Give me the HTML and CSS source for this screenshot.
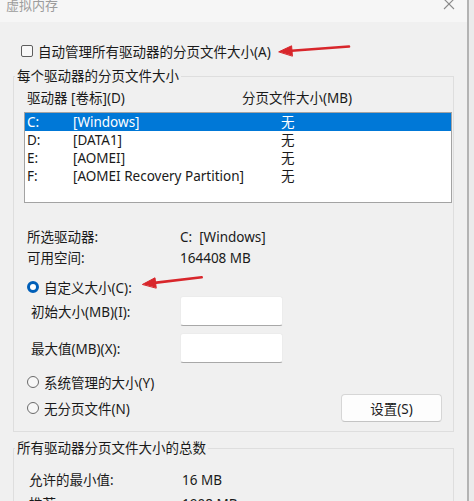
FILE: index.html
```html
<!DOCTYPE html>
<html lang="zh-CN">
<head>
<meta charset="utf-8">
<title>虚拟内存</title>
<link rel="stylesheet" href="styles.css">
</head>
<body>
<div class="screen">
  <div class="window">
    <div class="titlebar">
      <span class="title">虚拟内存</span>
      <svg class="close" viewBox="0 0 12 12" width="12" height="12"><path d="M1 1 L11 11 M11 1 L1 11" stroke="#8a8a8a" stroke-width="1.1" fill="none"/></svg>
    </div>
    <div class="content">
      <div class="check-row"><span class="checkbox"></span><span>自动管理所有驱动器的分页文件大小(A)</span></div>

      <fieldset class="group group-drives">
        <legend>每个驱动器的分页文件大小</legend>
        <div class="list-header"><span class="col-drive">驱动器 [卷标](D)</span><span>分页文件大小(MB)</span></div>
        <div class="listbox">
          <div class="row selected"><span class="c1">C:</span><span class="c2">[Windows]</span><span>无</span></div>
          <div class="row"><span class="c1">D:</span><span class="c2">[DATA1]</span><span>无</span></div>
          <div class="row"><span class="c1">E:</span><span class="c2">[AOMEI]</span><span>无</span></div>
          <div class="row"><span class="c1">F:</span><span class="c2">[AOMEI Recovery Partition]</span><span>无</span></div>
        </div>
        <div class="info">
          <div class="info-row"><span class="k">所选驱动器:</span><span>C:&nbsp;&nbsp;[Windows]</span></div>
          <div class="info-row"><span class="k">可用空间:</span><span>164408 MB</span></div>
        </div>
        <div class="radio-row first"><span class="radio on"></span><span>自定义大小(C):</span></div>
        <div class="field-row"><span class="field-label">初始大小(MB)(I):</span><span class="textbox"></span></div>
        <div class="field-row second"><span class="field-label">最大值(MB)(X):</span><span class="textbox"></span></div>
        <div class="radio-row sys"><span class="radio"></span><span>系统管理的大小(Y)</span></div>
        <div class="last-row">
          <div class="radio-inline"><span class="radio"></span><span>无分页文件(N)</span></div>
          <button class="btn">设置(S)</button>
        </div>
      </fieldset>

      <fieldset class="group group-total">
        <legend>所有驱动器分页文件大小的总数</legend>
        <div class="sum">
          <div class="sum-row"><span class="k2">允许的最小值:</span><span>16 MB</span></div>
          <div class="sum-row"><span class="k2">推荐:</span><span>1908 MB</span></div>
        </div>
      </fieldset>
    </div>
  </div>

  <svg class="annot" viewBox="0 0 474 501" width="474" height="501">
    <g stroke="#d8262b" stroke-width="2.6" stroke-linecap="round" fill="#d8262b">
      <line x1="349" y1="46.5" x2="288" y2="51"/>
      <polygon points="279,51.7 291.6,45.8 292.4,55.8" stroke-width="1" stroke-linejoin="round"/>
      <line x1="201.7" y1="277.3" x2="150" y2="283.4"/>
      <polygon points="142.7,284.3 155,277.8 156.2,287.8" stroke-width="1" stroke-linejoin="round"/>
    </g>
  </svg>
</div>
</body>
</html>
```

FILE: styles.css
```css
* { box-sizing: border-box; }
html, body { margin: 0; padding: 0; }
body {
  background: #ebebeb;
  font-family: "Noto Sans", "Noto Sans CJK SC", sans-serif;
  font-size: 13.5px;
  color: #1a1a1a;
}
.screen { position: relative; width: 474px; height: 501px; overflow: hidden; }
.window {
  width: 469px;
  height: 501px;
  background: #f0f0f0;
  border-right: 2px solid #b3b3b3;
}
.titlebar {
  height: 22px;
  background: #f6f6f6;
  display: flex;
  justify-content: space-between;
  padding: 0 12px 0 6px;
}
.title { color: #9c9c9c; line-height: 13px; margin-top: -1px; font-size: 13px; }
.close { margin-top: -2px; }
.content { padding: 20px 0 0 13px; }

.check-row { display: flex; align-items: center; height: 18px; gap: 5px; padding-left: 8px; }
.checkbox {
  width: 12px; height: 12px;
  border: 1px solid #5e5e5e;
  border-radius: 2px;
  background: #f8f8f8;
}

.group {
  margin: 9px 0 0;
  padding: 0;
  border: 1px solid #dedede;
  width: 441px;
  min-width: 0;
}
.group legend { padding: 0 2px; margin-left: 1px; line-height: 14px; }
.group-drives { padding-bottom: 9px; }

.list-header { display: flex; padding: 6px 0 0 13px; line-height: 18px; }
.col-drive { width: 215px; }

.listbox {
  margin: 5px 1px 0 10px;
  height: 91px;
  border: 1px solid #a3a3a3;
  background: #fff;
}
.row { display: flex; height: 18px; line-height: 18px; padding-left: 2px; }
.row.selected { background: #0078d7; color: #fff; }
.c1 { width: 46px; }
.c2 { width: 208px; }

.info { margin-top: 24px; padding-left: 13px; }
.info-row { display: flex; line-height: 21px; }
.k { width: 153px; }

.radio-row { display: flex; align-items: center; height: 18px; gap: 5px; padding-left: 13px; }
.radio-row.first { margin-top: 9px; }
.radio-row.sys { margin-top: 10px; }
.radio {
  width: 12px; height: 12px;
  border-radius: 50%;
  border: 1px solid #6a6a6a;
  background: #f7f7f7;
  flex: none;
}
.radio.on { border: 3.5px solid #005fb8; background: #fff; }

.field-row { display: flex; align-items: center; padding-left: 17px; }
.field-row.second { margin-top: 7px; }
.field-label { width: 149px; }
.textbox {
  width: 103px; height: 30px;
  background: #fff;
  border: 1px solid #ececec;
  border-bottom-color: #a8a8a8;
  border-radius: 3px;
}

.last-row {
  display: flex; align-items: center; justify-content: space-between;
  height: 28px; margin-top: 3px; padding: 0 11px 0 13px;
}
.radio-inline { display: flex; align-items: center; gap: 5px; }
.btn {
  width: 101px; height: 28px;
  font: inherit; color: #1a1a1a;
  background: #fdfdfd;
  border: 1px solid #d6d6d6;
  border-bottom-color: #c4c4c4;
  border-radius: 4px;
  padding: 0;
}

.group-total { margin-top: 9px; height: 80px; border-bottom: none; }
.sum { padding: 13px 0 0 15px; }
.sum-row { display: flex; line-height: 24px; }
.k2 { width: 153px; }

.annot { position: absolute; left: 0; top: 0; pointer-events: none; }
```
